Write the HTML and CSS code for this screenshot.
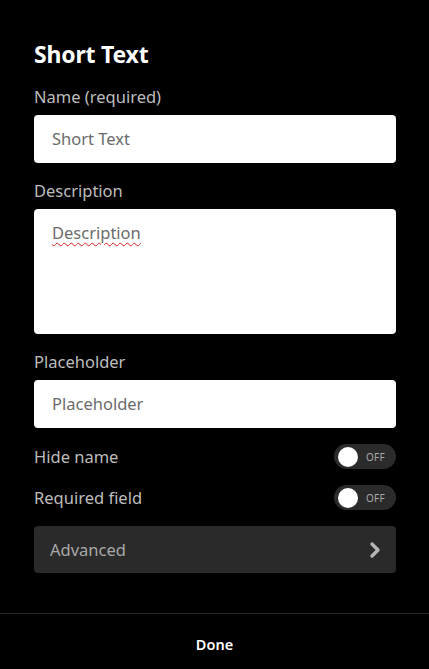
FILE: index.html
```html
<!DOCTYPE html>
<html>
<head>
<meta charset="utf-8">
<link rel="stylesheet" href="styles.css">
</head>
<body>
<div class="panel">
  <div class="content">
    <h1 class="title">Short Text</h1>
    <label class="label">Name (required)</label>
    <div class="input"><span class="ph">Short Text</span></div>
    <label class="label">Description</label>
    <div class="input textarea"><span class="ph spell">Description</span></div>
    <label class="label">Placeholder</label>
    <div class="input"><span class="ph">Placeholder</span></div>
    <div class="row">
      <span class="row-label">Hide name</span>
      <div class="toggle"><span class="knob"></span><span class="off">OFF</span></div>
    </div>
    <div class="row">
      <span class="row-label">Required field</span>
      <div class="toggle"><span class="knob"></span><span class="off">OFF</span></div>
    </div>
    <div class="advanced">
      <span>Advanced</span>
      <svg class="chev" width="14" height="18" viewBox="0 0 14 18"><path d="M4 3 L10 9 L4 15" fill="none" stroke="#b5b5b5" stroke-width="3.4" stroke-linecap="round" stroke-linejoin="round"/></svg>
    </div>
  </div>
  <div class="footer">
    <span class="done">Done</span>
  </div>
</div>
</body>
</html>
```

FILE: styles.css
```css
* { box-sizing: border-box; }
html, body { margin: 0; padding: 0; background: #000; }
body { font-family: "Noto Sans", "Open Sans", sans-serif; color: #fff; width: 429px; height: 669px; overflow: hidden; }
.panel { display: flex; flex-direction: column; height: 669px; }
.content { padding: 38px 33px 0 34px; display: flex; flex-direction: column; flex: 1; }
.title { margin: 0; font-size: 23px; font-weight: 700; line-height: 32px; letter-spacing: -0.2px; color: #fff; }
.label { display: block; font-size: 16.5px; line-height: 22px; color: #bdbdbd; margin-top: 17px; margin-bottom: 7px; }
.title + .label { margin-top: 16px; }
.input { background: #fff; border-radius: 4px; height: 48px; display: flex; align-items: center; padding: 0 18px; }
.textarea { height: 125px; align-items: flex-start; padding-top: 13px; }
.ph { color: #6b6b6b; font-size: 16.5px; line-height: 22px; }
.spell { text-decoration: underline wavy #e02020; text-decoration-thickness: 1px; text-underline-offset: 3px; }
.row { display: flex; align-items: center; justify-content: space-between; height: 25px; margin-top: 16px; }
.row-label { font-size: 16.5px; color: #bdbdbd; }
.toggle { width: 62px; height: 25px; border-radius: 13px; background: #2b2b2b; display: flex; align-items: center; padding-left: 4px; gap: 8px; }
.knob { width: 20px; height: 20px; border-radius: 50%; background: #fff; }
.off { font-size: 10px; color: #a8a8a8; letter-spacing: 0.2px; }
.advanced { margin-top: 16px; height: 47px; background: #2a2a2a; border-radius: 4px; display: flex; align-items: center; justify-content: space-between; padding: 0 14px 0 16px; font-size: 16.5px; color: #a8a8a8; }
.footer { border-top: 1px solid #262626; height: 56px; display: flex; align-items: center; justify-content: center; }
.done { font-size: 14.5px; font-weight: 600; color: #fff; margin-top: 4px; }
```
